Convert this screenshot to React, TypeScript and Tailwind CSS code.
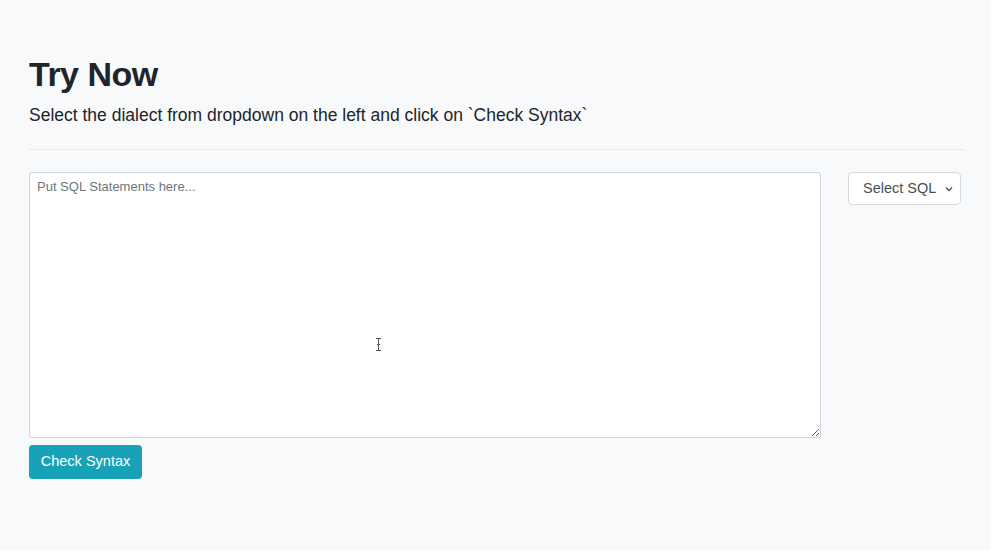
export default function App() {
  return (
    <div className="w-[1000px] h-[560px] bg-white flex flex-col font-['Liberation_Sans',Arial,sans-serif] text-[#212529] overflow-hidden">
      <div className="h-[550px] w-[990px] bg-[#f8f9fa] pl-[29px] pr-[25px] pt-[54px]">
        <h1 className="text-[34px] leading-[40px] font-bold tracking-[-0.5px]">Try Now</h1>
        <p className="mt-[9px] text-[17.5px] leading-[24px]">
          Select the dialect from dropdown on the left and click on `Check Syntax`
        </p>
        <hr className="mt-[22px] border-t border-[#e9eaec]" />
        <div className="mt-[22px] flex items-start">
          <div className="flex flex-col">
            {/* editor with a mouse cursor resting on it */}
            <div className="relative">
              <textarea
                className="block w-[792px] h-[266px] bg-white border border-[#ced4da] rounded-[3px] px-[7px] py-[5px] text-[13px] leading-[18px] placeholder:text-[#6c757d] outline-none"
                placeholder="Put SQL Statements here..."
              />
              <svg className="absolute left-[346px] top-[166px]" width="7" height="13" viewBox="0 0 7 13" fill="none" stroke="#555" strokeWidth="1">
                <path d="M1 0.5h5M1 12.5h5M3.5 0.5v12M2 6.5h3" />
              </svg>
            </div>
            <button
              type="button"
              className="mt-[7px] w-[113px] h-[34px] bg-[#17a2b8] text-white text-[14.5px] rounded-[4px] flex items-center justify-center"
            >
              Check Syntax
            </button>
          </div>
          <div className="ml-[27px] w-[113px] h-[33px] bg-white border border-[#d6d9dc] rounded-[4px] flex items-center justify-between pl-[14px] pr-[7px] text-[14.5px] text-[#495057]">
            <span>Select SQL</span>
            <svg width="8" height="6" viewBox="0 0 8 6" fill="none" stroke="#495057" strokeWidth="1.3">
              <path d="M1 1.5l3 3 3-3" />
            </svg>
          </div>
        </div>
      </div>
    </div>
  );
}
